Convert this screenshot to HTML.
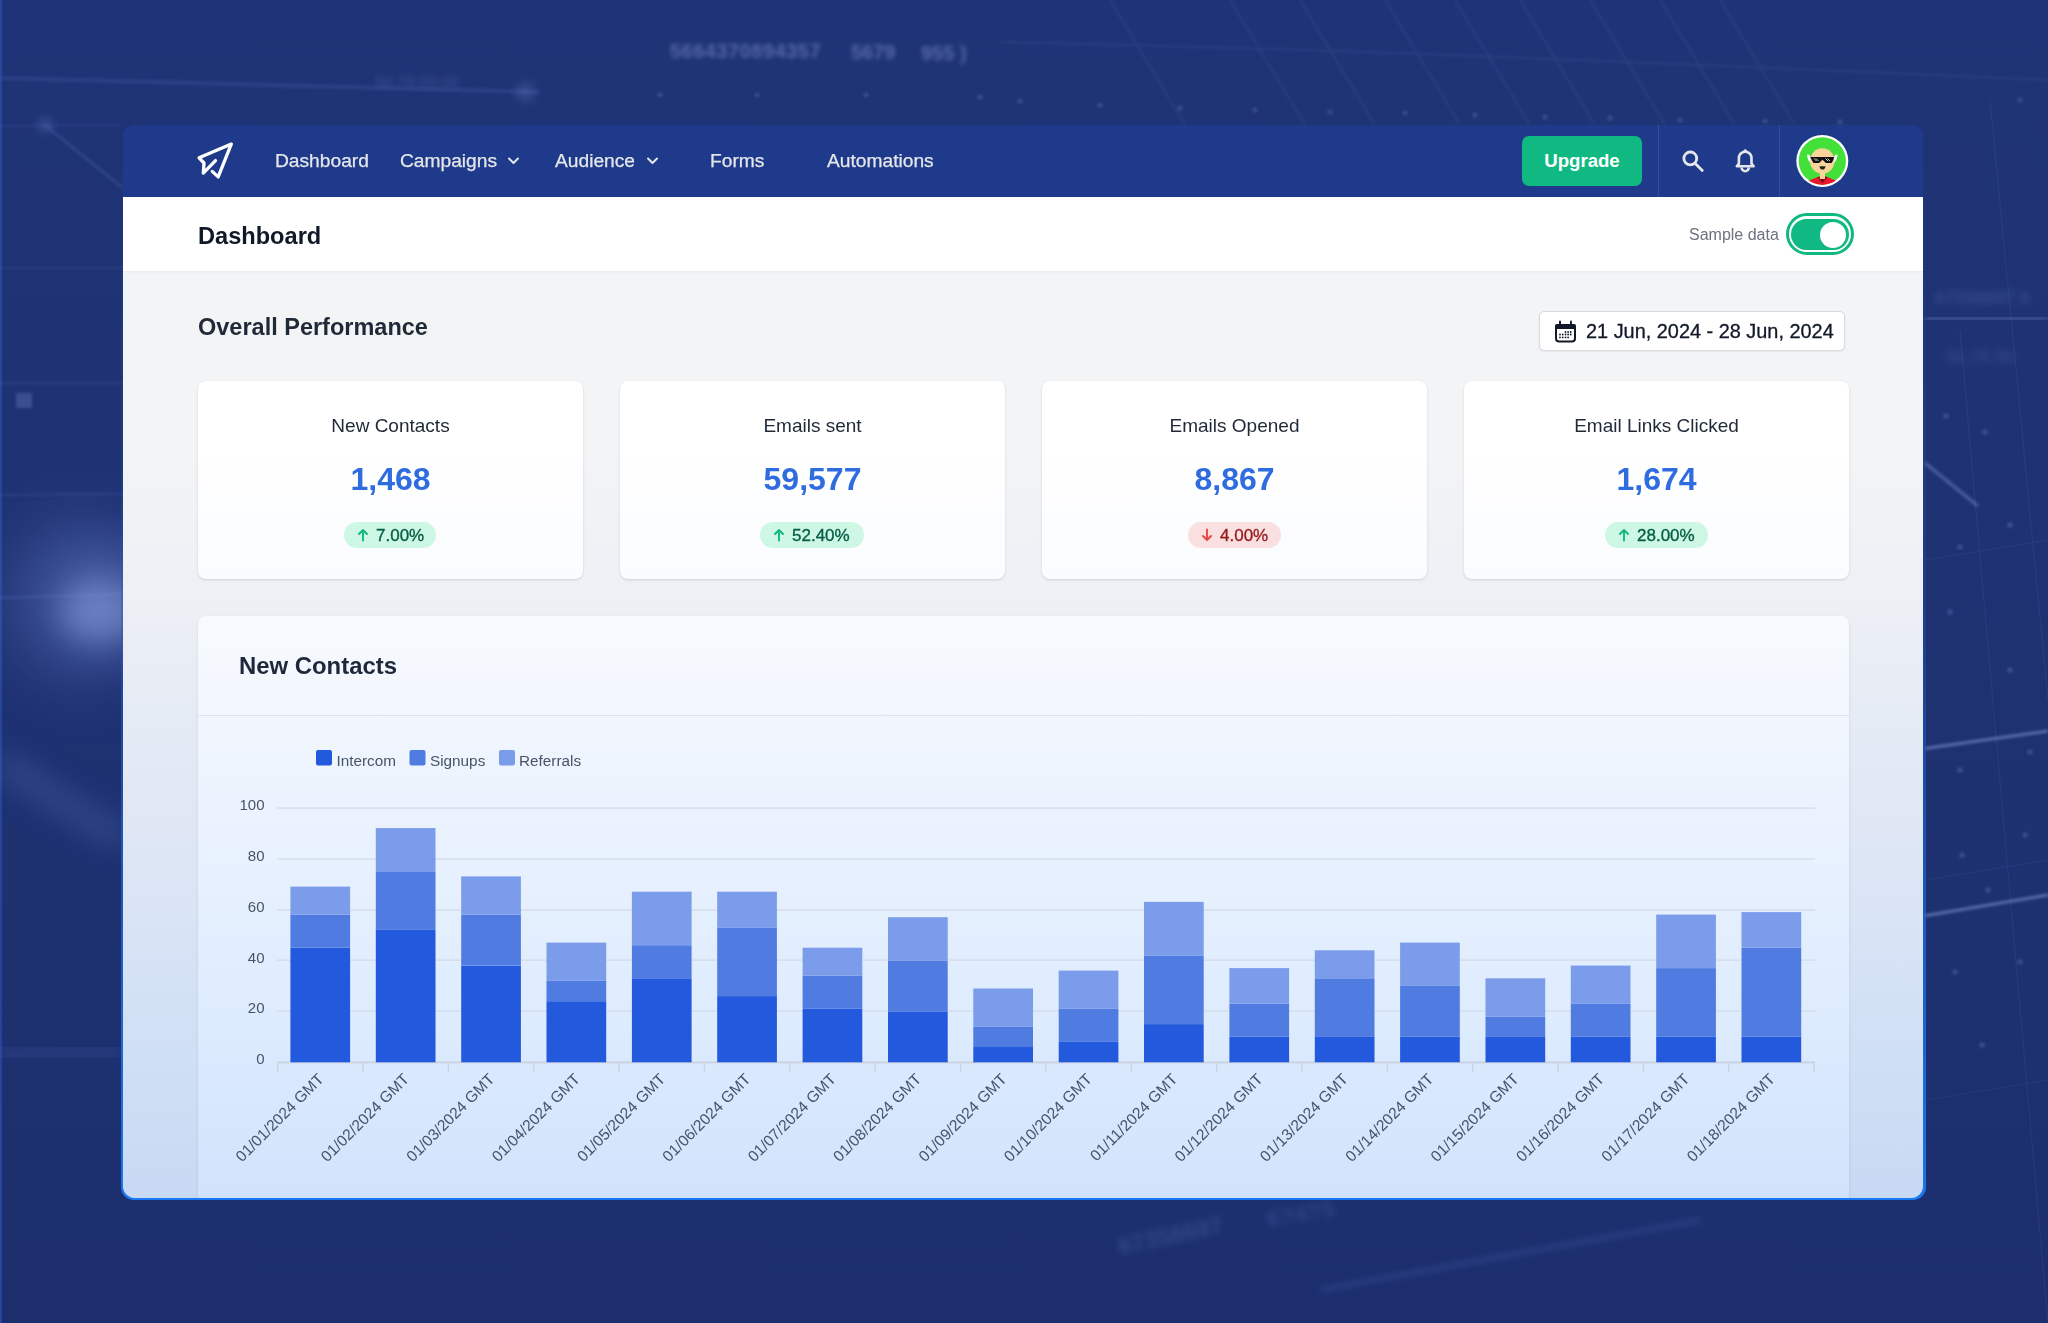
<!DOCTYPE html>
<html><head><meta charset="utf-8">
<style>
*{box-sizing:border-box;margin:0;padding:0}
html,body{width:2048px;height:1323px;overflow:hidden}
body{font-family:"Liberation Sans",sans-serif;background:linear-gradient(to bottom,rgb(31,52,118) 0%,rgb(30,50,114) 50%,rgb(28,46,110) 100%);position:relative}
.abs{position:absolute;white-space:nowrap}
.bg{position:absolute;left:0;top:0;width:2048px;height:1323px;overflow:hidden}
.frame{position:absolute;left:121px;top:125px;width:1805px;height:1075px;border-radius:13px;
 background:linear-gradient(to bottom,rgba(40,70,160,0) 0%,rgba(40,80,180,.35) 45%,#1877f2 100%)}
.win{position:absolute;left:123px;top:125px;width:1800px;height:1073px;border-radius:12px;overflow:hidden;background:linear-gradient(to bottom,#1f3a8a 0,#1f3a8a 72px,#f3f4f6 72px)}
.nav{position:absolute;left:0;top:0;width:1800px;height:72px;background:#1f3a8a}
.lnk{position:absolute;top:0;height:72px;line-height:72px;font-size:19.2px;color:#e5e7eb;white-space:nowrap;-webkit-text-stroke:.25px #e5e7eb}
.hdr{position:absolute;left:0;top:72px;width:1800px;height:74px;background:#fff;box-shadow:0 1px 2px rgba(0,0,0,.05)}
.card{position:absolute;top:256px;width:385px;height:198px;background:#fff;border-radius:8px;box-shadow:0 1px 3px rgba(0,0,0,.1),0 1px 2px rgba(0,0,0,.04)}
.card .t{position:absolute;left:0;right:0;top:33.5px;text-align:center;font-size:19px;color:#1f2937;white-space:nowrap}
.card .v{position:absolute;left:0;right:0;top:80px;text-align:center;font-size:32px;font-weight:700;color:#2f6ce0}
.badge{position:absolute;top:141px;height:26px;border-radius:13px;font-size:17px;line-height:27px;white-space:nowrap}
.badge svg{position:absolute;left:13px;top:6px}
.badge span{position:absolute;left:32px;top:0;-webkit-text-stroke:.35px currentColor}
.up{background:#d1fae5;color:#065f46}
.dn{background:#fee2e2;color:#991b1b}
.panel{position:absolute;left:75px;top:491px;width:1651px;height:640px;background:#fff;border-radius:8px;box-shadow:0 1px 3px rgba(0,0,0,.1)}
.ov{position:absolute;left:0;top:0;width:1800px;height:1073px;mix-blend-mode:multiply;
 background:linear-gradient(to bottom,#fff 0%,#fff 30%,rgb(249,251,254) 44%,rgb(236,243,254) 63%,rgb(222,236,254) 82%,rgb(209,227,252) 100%)}
.tk{font-size:15px;fill:#465467}
.tkx{font-size:15.6px;fill:#465467}
.lg{font-size:15.3px;fill:#465467}
</style></head><body>
<div class="bg">
<svg class="abs" style="left:0;top:0" width="2048" height="1323" viewBox="0 0 2048 1323">
<defs><filter id="b1" x="-50%" y="-50%" width="200%" height="200%"><feGaussianBlur stdDeviation="1.6"/></filter><filter id="b2s" x="-50%" y="-50%" width="200%" height="200%"><feGaussianBlur stdDeviation="2"/></filter><filter id="b2" x="-50%" y="-50%" width="200%" height="200%"><feGaussianBlur stdDeviation="3"/></filter><filter id="b3s" x="-50%" y="-50%" width="200%" height="200%"><feGaussianBlur stdDeviation="5"/></filter><filter id="b3" x="-50%" y="-50%" width="200%" height="200%"><feGaussianBlur stdDeviation="14"/></filter><filter id="b4" x="-50%" y="-50%" width="200%" height="200%"><feGaussianBlur stdDeviation="30"/></filter><radialGradient id="vg" cx="50%" cy="45%" r="75%"><stop offset="0" stop-color="#203578" stop-opacity="0"/><stop offset="1" stop-color="#16245a" stop-opacity=".45"/></radialGradient></defs>

<rect x="0" y="0" width="2" height="1323" fill="#2c4aa8" opacity=".8"/>
<text x="670" y="58" font-size="20" font-weight="700" fill="#9db0ea" opacity=".42" filter="url(#b2s)" letter-spacing=".5">5664370894357</text>
<text x="851" y="59" font-size="20" font-weight="700" fill="#9db0ea" opacity=".42" filter="url(#b2s)">5679</text>
<text x="921" y="60" font-size="20" font-weight="700" fill="#9db0ea" opacity=".42" filter="url(#b2s)">955  )</text>
<g stroke="#7f98e0" fill="none" filter="url(#b1)">
<path d="M0 78 L540 92" stroke-width="4" opacity=".14"/>
<path d="M0 126 L120 125" stroke-width="2" opacity=".12"/>
<path d="M45 125 L123 188" stroke-width="2.5" opacity=".2"/>
<path d="M0 268 L123 268" stroke-width="2" opacity=".12"/>
<path d="M0 383 L123 383" stroke-width="2" opacity=".12"/>
<path d="M0 495 L123 494" stroke-width="2" opacity=".14"/>
<path d="M0 598 L123 594" stroke-width="2" opacity=".22"/>
</g>
<path d="M0 296 L123 296" stroke="#7f98e0" stroke-width="9" opacity=".3" filter="url(#b2)"/>
<circle cx="525" cy="92" r="10" fill="#8fa5e6" opacity=".2" filter="url(#b3s)"/>
<circle cx="45" cy="125" r="8" fill="#8fa5e6" opacity=".2" filter="url(#b3s)"/>
<rect x="16" y="393" width="16" height="15" fill="#8fa5e6" opacity=".25" filter="url(#b1)"/>
<text x="375" y="88" font-size="16" font-weight="700" fill="#8fa5e6" opacity=".18" filter="url(#b2)">56.78.56.85</text>
<g stroke="#8fa5e6" stroke-width="1.5" fill="none" opacity=".12" filter="url(#b1)">
<path d="M1110 0 L1185 125"/>
<path d="M1230 0 L1305 125"/>
<path d="M1300 0 L1375 125"/>
<path d="M1385 0 L1460 125"/>
<path d="M1455 0 L1530 125"/>
<path d="M1520 0 L1595 125"/>
<path d="M1590 0 L1665 125"/>
<path d="M1660 0 L1735 125"/>
<path d="M1720 0 L1795 125"/>
<path d="M1000 42 C1300 48 1600 60 2048 80"/>
</g>
<circle cx="660" cy="95" r="2.5" fill="#8fa5e6" opacity=".25" filter="url(#b1)"/>
<circle cx="757" cy="95" r="2.5" fill="#8fa5e6" opacity=".25" filter="url(#b1)"/>
<circle cx="866" cy="95" r="2.5" fill="#8fa5e6" opacity=".25" filter="url(#b1)"/>
<circle cx="980" cy="97" r="2.5" fill="#8fa5e6" opacity=".25" filter="url(#b1)"/>
<circle cx="1020" cy="101" r="2.5" fill="#8fa5e6" opacity=".25" filter="url(#b1)"/>
<circle cx="1100" cy="105" r="2.5" fill="#8fa5e6" opacity=".25" filter="url(#b1)"/>
<circle cx="1180" cy="108" r="2.5" fill="#8fa5e6" opacity=".25" filter="url(#b1)"/>
<circle cx="1255" cy="110" r="2.5" fill="#8fa5e6" opacity=".25" filter="url(#b1)"/>
<circle cx="1330" cy="112" r="2.5" fill="#8fa5e6" opacity=".25" filter="url(#b1)"/>
<circle cx="1405" cy="113" r="2.5" fill="#8fa5e6" opacity=".25" filter="url(#b1)"/>
<circle cx="1475" cy="115" r="2.5" fill="#8fa5e6" opacity=".25" filter="url(#b1)"/>
<circle cx="1545" cy="117" r="2.5" fill="#8fa5e6" opacity=".25" filter="url(#b1)"/>
<circle cx="1610" cy="118" r="2.5" fill="#8fa5e6" opacity=".25" filter="url(#b1)"/>
<circle cx="1680" cy="120" r="2.5" fill="#8fa5e6" opacity=".25" filter="url(#b1)"/>
<circle cx="1765" cy="121" r="2.5" fill="#8fa5e6" opacity=".25" filter="url(#b1)"/>
<circle cx="1840" cy="122" r="2.5" fill="#8fa5e6" opacity=".25" filter="url(#b1)"/>
<circle cx="2020" cy="100" r="2.5" fill="#8fa5e6" opacity=".25" filter="url(#b1)"/>
<ellipse cx="105" cy="600" rx="55" ry="42" fill="#8ea3e6" opacity=".4" filter="url(#b4)"/><ellipse cx="98" cy="612" rx="38" ry="30" fill="#9aafea" opacity=".45" filter="url(#b3)"/>
<ellipse cx="80" cy="600" rx="80" ry="90" fill="#6f86d4" opacity=".22" filter="url(#b4)"/>
<path d="M0 760 C40 790 90 820 125 840" stroke="#6f86d4" stroke-width="30" fill="none" opacity=".22" filter="url(#b3)"/>
<path d="M0 1055 L123 1050" stroke="#6f86d4" stroke-width="18" fill="none" opacity=".1" filter="url(#b3s)"/>
<path d="M1925 319 L2048 318" stroke="#7f98e0" stroke-width="6" opacity=".35" filter="url(#b2)"/>
<text x="1935" y="304" font-size="18" font-weight="700" fill="#8fa5e6" opacity=".2" filter="url(#b2)">67356697  6</text>
<text x="1945" y="363" font-size="18" font-weight="700" fill="#8fa5e6" opacity=".15" filter="url(#b2)">56.78.56</text>
<path d="M1925 463 L1978 506" stroke="#8fa5e6" stroke-width="3" opacity=".4" filter="url(#b1)"/>
<path d="M1925 748.6 L2048 731" stroke="#9fb4ee" stroke-width="2.5" opacity=".55" filter="url(#b1)"/>
<path d="M1925 915.8 L2048 895" stroke="#9fb4ee" stroke-width="2.5" opacity=".55" filter="url(#b1)"/>
<g stroke="#7f98e0" stroke-width="1" opacity=".1">
<path d="M1960 330 L2048 1323"/><path d="M1990 100 L2048 700"/><path d="M1925 880 L2048 860"/><path d="M1925 1100 L2048 1080"/><path d="M1925 560 L2048 540"/>
</g>
<circle cx="1946" cy="416" r="2.5" fill="#8fa5e6" opacity=".3" filter="url(#b1)"/>
<circle cx="1985" cy="432" r="2.5" fill="#8fa5e6" opacity=".3" filter="url(#b1)"/>
<circle cx="1960" cy="547" r="2.5" fill="#8fa5e6" opacity=".3" filter="url(#b1)"/>
<circle cx="2010" cy="525" r="2.5" fill="#8fa5e6" opacity=".3" filter="url(#b1)"/>
<circle cx="1950" cy="612" r="2.5" fill="#8fa5e6" opacity=".3" filter="url(#b1)"/>
<circle cx="2010" cy="670" r="2.5" fill="#8fa5e6" opacity=".3" filter="url(#b1)"/>
<circle cx="1960" cy="770" r="2.5" fill="#8fa5e6" opacity=".3" filter="url(#b1)"/>
<circle cx="2030" cy="752" r="2.5" fill="#8fa5e6" opacity=".3" filter="url(#b1)"/>
<circle cx="1962" cy="855" r="2.5" fill="#8fa5e6" opacity=".3" filter="url(#b1)"/>
<circle cx="2025" cy="835" r="2.5" fill="#8fa5e6" opacity=".3" filter="url(#b1)"/>
<circle cx="1988" cy="890" r="2.5" fill="#8fa5e6" opacity=".3" filter="url(#b1)"/>
<circle cx="1955" cy="972" r="2.5" fill="#8fa5e6" opacity=".3" filter="url(#b1)"/>
<circle cx="2020" cy="962" r="2.5" fill="#8fa5e6" opacity=".3" filter="url(#b1)"/>
<circle cx="1982" cy="1045" r="2.5" fill="#8fa5e6" opacity=".3" filter="url(#b1)"/>
<text transform="translate(1120 1255) rotate(-12)" font-size="24" font-weight="700" fill="#8fa5e6" opacity=".2" filter="url(#b2)">67356697</text>
<text transform="translate(1268 1228) rotate(-10)" font-size="24" font-weight="700" fill="#8fa5e6" opacity=".17" filter="url(#b2)">6?4?5</text>
<path d="M1320 1290 L1700 1220" stroke="#7f98e0" stroke-width="4" opacity=".2" filter="url(#b2)"/>
</svg>
</div>
<div class="frame"></div>
<div class="win">
  <div class="nav">
    <svg class="abs" style="left:0;top:0" width="200" height="72" viewBox="123 125 200 72">
      <path d="M231.3 144.1 L199.1 157.8 L204 163 L203.3 173.1 L215.5 160.6 M212.2 171.4 L218.2 176.9 L231.3 144.1" fill="none" stroke="#fff" stroke-width="3.3" stroke-linejoin="round" stroke-linecap="round"/>
    </svg>
    <div class="lnk" style="left:152px">Dashboard</div>
    <div class="lnk" style="left:277px">Campaigns</div>
    <div class="lnk" style="left:432px">Audience</div>
    <div class="lnk" style="left:587px">Forms</div>
    <div class="lnk" style="left:704px">Automations</div>
    <svg class="abs" style="left:0;top:0" width="1800" height="72" viewBox="123 125 1800 72">
      <path d="M509 158.5 L513.5 163 L518 158.5" fill="none" stroke="#e5e7eb" stroke-width="2" stroke-linecap="round" stroke-linejoin="round"/>
      <path d="M648 158.5 L652.5 163 L657 158.5" fill="none" stroke="#e5e7eb" stroke-width="2" stroke-linecap="round" stroke-linejoin="round"/>
      <circle cx="1690.3" cy="158.4" r="6.4" fill="none" stroke="#e5e7eb" stroke-width="2.8"/>
      <path d="M1695.2 163.6 L1702.3 170.4" stroke="#e5e7eb" stroke-width="2.8" stroke-linecap="round"/>
      <path d="M1736.8 166.3 L1738.9 163.6 L1738.9 158.3 C1738.9 154.6 1741 152.6 1743.6 151.9 L1745.2 150.6 L1746.8 151.9 C1749.4 152.6 1751.5 154.6 1751.5 158.3 L1751.5 163.6 L1753.6 166.3 Z" fill="none" stroke="#e5e7eb" stroke-width="2.6" stroke-linejoin="round"/>
      <path d="M1741.6 167.6 A3.6 3.6 0 0 0 1748.8 167.6" fill="none" stroke="#e5e7eb" stroke-width="2.6"/>
    </svg>
    <div class="abs" style="left:1399px;top:11px;width:120px;height:50px;background:#10b981;border-radius:7px;color:#fff;font-weight:700;font-size:18.6px;line-height:50px;text-align:center">Upgrade</div>
    <div class="abs" style="left:1535px;top:0;width:1px;height:72px;background:rgba(255,255,255,.1)"></div>
    <div class="abs" style="left:1656px;top:0;width:1px;height:72px;background:rgba(255,255,255,.1)"></div>
    <svg class="abs" style="left:0;top:0" width="1800" height="72" viewBox="123 125 1800 72">
      <defs><clipPath id="av"><circle cx="1822.3" cy="160.9" r="24"/></clipPath></defs>
      <circle cx="1822.3" cy="160.9" r="26" fill="#fff"/>
      <circle cx="1822.3" cy="160.9" r="23.6" fill="#43e03a"/>
      <g clip-path="url(#av)">
        <path d="M1808 181 L1822.5 175 L1837 181 L1842 190 L1803 190 Z" fill="#e8192c"/>
        <path d="M1817.5 177 L1822.5 183 L1827.5 177 Z" fill="#7a0a10"/>
        <rect x="1819.8" y="170" width="5.2" height="9" fill="#f9d39a"/>
      </g>
      <path d="M1807 155 C1809 153.5 1810 156 1811 158 L1811 163 C1809 162 1807.5 159 1807 155 Z" fill="#fff"/>
      <path d="M1837.6 155 C1835.6 153.5 1834.6 156 1833.6 158 L1833.6 163 C1835.6 162 1837.1 159 1837.6 155 Z" fill="#fff"/>
      <ellipse cx="1822.3" cy="161" rx="12.2" ry="12.8" fill="#f9d39a"/>
      <path d="M1810.2 157 L1834.3 157 L1833 160.5 L1831.5 163 L1826 163 L1822.5 159.8 L1819 163 L1813.5 163 L1812 160.5 Z" fill="#111"/>
      <path d="M1814 158.5 L1816.5 161 M1816 158.5 L1818.5 161 M1825.5 158.5 L1828 161 M1827.5 158.5 L1830 161" stroke="#fff" stroke-width=".8"/>
      <path d="M1819.5 166.3 L1825.5 166.3 C1825.3 168.8 1824 169.6 1822.5 169.6 C1821 169.6 1819.7 168.8 1819.5 166.3 Z" fill="#222"/>
    </svg>
  </div>
  <div class="hdr">
    <div class="abs" style="left:75px;top:26px;font-size:23.6px;font-weight:700;color:#111827">Dashboard</div>
    <div class="abs" style="left:1566px;top:29px;font-size:16px;color:#6b7280">Sample data</div>
    <div class="abs" style="left:1663px;top:16px;width:68px;height:42px;border-radius:21px;border:3px solid #10b981;background:#fff">
      <div class="abs" style="left:2px;top:2.5px;width:58px;height:31px;border-radius:16px;background:#10b981"></div>
      <div class="abs" style="left:30.5px;top:5.5px;width:26px;height:26px;border-radius:50%;background:#fff"></div>
    </div>
  </div>
  <div class="abs" style="left:75px;top:189px;font-size:23.5px;font-weight:700;color:#1f2937">Overall Performance</div>
  <div class="abs" style="left:1416px;top:186px;width:306px;height:40px;background:#fff;border:1px solid #d5d9e0;border-radius:5px;box-shadow:0 1px 2px rgba(0,0,0,.06)">
    <svg class="abs" style="left:0;top:0" width="306" height="40" viewBox="1539 311 306 40">
      <rect x="1555" y="324" width="19" height="16.4" rx="3" fill="none" stroke="#111827" stroke-width="2"/>
      <rect x="1554" y="323" width="21" height="5" rx="2" fill="#111827"/>
      <path d="M1559 320.5 L1559 323.5 M1570 320.5 L1570 323.5" stroke="#111827" stroke-width="1.9" stroke-linecap="round"/>
      <g fill="#111827"><circle cx="1564.5" cy="331" r=".9"/><circle cx="1567.1" cy="331" r=".9"/><circle cx="1569.7" cy="331" r=".9"/>
      <circle cx="1559" cy="333.5" r=".9"/><circle cx="1561.7" cy="333.5" r=".9"/><circle cx="1564.5" cy="333.5" r=".9"/><circle cx="1567.1" cy="333.5" r=".9"/><circle cx="1569.7" cy="333.5" r=".9"/>
      <circle cx="1559" cy="336.4" r=".9"/><circle cx="1561.7" cy="336.4" r=".9"/><circle cx="1564.5" cy="336.4" r=".9"/><circle cx="1567.1" cy="336.4" r=".9"/></g>
    </svg>
    <div class="abs" style="left:46px;top:8px;font-size:19.9px;color:#111827;-webkit-text-stroke:.3px #111827">21 Jun, 2024 - 28 Jun, 2024</div>
  </div>

  <div class="card" style="left:75px"><div class="t">New Contacts</div><div class="v">1,468</div>
    <div class="badge up" style="left:146px;width:92px"><svg width="12" height="14" viewBox="0 0 12 14"><path d="M6 12.5 L6 2 M2 6 L6 2 L10 6" fill="none" stroke="#10b981" stroke-width="1.9" stroke-linecap="round" stroke-linejoin="round"/></svg><span>7.00%</span></div></div>
  <div class="card" style="left:497px"><div class="t">Emails sent</div><div class="v">59,577</div>
    <div class="badge up" style="left:140px;width:104px"><svg width="12" height="14" viewBox="0 0 12 14"><path d="M6 12.5 L6 2 M2 6 L6 2 L10 6" fill="none" stroke="#10b981" stroke-width="1.9" stroke-linecap="round" stroke-linejoin="round"/></svg><span>52.40%</span></div></div>
  <div class="card" style="left:919px"><div class="t">Emails Opened</div><div class="v">8,867</div>
    <div class="badge dn" style="left:146px;width:93px"><svg width="12" height="14" viewBox="0 0 12 14"><path d="M6 1.5 L6 12 M2 8 L6 12 L10 8" fill="none" stroke="#ef4444" stroke-width="1.9" stroke-linecap="round" stroke-linejoin="round"/></svg><span>4.00%</span></div></div>
  <div class="card" style="left:1341px"><div class="t">Email Links Clicked</div><div class="v">1,674</div>
    <div class="badge up" style="left:141px;width:103px"><svg width="12" height="14" viewBox="0 0 12 14"><path d="M6 12.5 L6 2 M2 6 L6 2 L10 6" fill="none" stroke="#10b981" stroke-width="1.9" stroke-linecap="round" stroke-linejoin="round"/></svg><span>28.00%</span></div></div>

  <div class="panel">
    <div class="abs" style="left:41px;top:36.3px;font-size:23.9px;font-weight:700;color:#1e293b">New Contacts</div>
    <div class="abs" style="left:0;top:99px;width:1651px;height:1px;background:#e9ecf1"></div>
  </div>
  <div class="ov"></div>
<svg class="abs" style="left:0;top:0" width="1800" height="1074" viewBox="123 125 1800 1074">
<rect x="277" y="1061.5" width="1538" height="1.8" fill="#c9d2de"/>
<rect x="277" y="1010.5" width="1538" height="1.2" fill="#d3dae4"/>
<rect x="277" y="959.5" width="1538" height="1.2" fill="#d3dae4"/>
<rect x="277" y="909.5" width="1538" height="1.2" fill="#d3dae4"/>
<rect x="277" y="858.5" width="1538" height="1.2" fill="#d3dae4"/>
<rect x="277" y="807.5" width="1538" height="1.2" fill="#d3dae4"/>
<rect x="277.0" y="1062" width="1.3" height="10" fill="#cbd3de"/>
<rect x="362.4" y="1062" width="1.3" height="10" fill="#cbd3de"/>
<rect x="447.7" y="1062" width="1.3" height="10" fill="#cbd3de"/>
<rect x="533.1" y="1062" width="1.3" height="10" fill="#cbd3de"/>
<rect x="618.4" y="1062" width="1.3" height="10" fill="#cbd3de"/>
<rect x="703.8" y="1062" width="1.3" height="10" fill="#cbd3de"/>
<rect x="789.2" y="1062" width="1.3" height="10" fill="#cbd3de"/>
<rect x="874.5" y="1062" width="1.3" height="10" fill="#cbd3de"/>
<rect x="959.9" y="1062" width="1.3" height="10" fill="#cbd3de"/>
<rect x="1045.2" y="1062" width="1.3" height="10" fill="#cbd3de"/>
<rect x="1130.6" y="1062" width="1.3" height="10" fill="#cbd3de"/>
<rect x="1216.0" y="1062" width="1.3" height="10" fill="#cbd3de"/>
<rect x="1301.3" y="1062" width="1.3" height="10" fill="#cbd3de"/>
<rect x="1386.7" y="1062" width="1.3" height="10" fill="#cbd3de"/>
<rect x="1472.0" y="1062" width="1.3" height="10" fill="#cbd3de"/>
<rect x="1557.4" y="1062" width="1.3" height="10" fill="#cbd3de"/>
<rect x="1642.8" y="1062" width="1.3" height="10" fill="#cbd3de"/>
<rect x="1728.1" y="1062" width="1.3" height="10" fill="#cbd3de"/>
<rect x="1813.5" y="1062" width="1.3" height="10" fill="#cbd3de"/>
<rect x="290.4" y="947.7" width="59.7" height="114.6" fill="#2359dc"/>
<rect x="290.4" y="914.6" width="59.7" height="33.1" fill="#507ce2"/>
<rect x="290.4" y="886.6" width="59.7" height="28.0" fill="#7b9cea"/>
<rect x="375.8" y="929.9" width="59.7" height="132.4" fill="#2359dc"/>
<rect x="375.8" y="871.3" width="59.7" height="58.6" fill="#507ce2"/>
<rect x="375.8" y="828.1" width="59.7" height="43.3" fill="#7b9cea"/>
<rect x="461.2" y="965.6" width="59.7" height="96.7" fill="#2359dc"/>
<rect x="461.2" y="914.6" width="59.7" height="50.9" fill="#507ce2"/>
<rect x="461.2" y="876.4" width="59.7" height="38.2" fill="#7b9cea"/>
<rect x="546.5" y="1001.2" width="59.7" height="61.1" fill="#2359dc"/>
<rect x="546.5" y="980.8" width="59.7" height="20.4" fill="#507ce2"/>
<rect x="546.5" y="942.6" width="59.7" height="38.2" fill="#7b9cea"/>
<rect x="631.9" y="978.3" width="59.7" height="84.0" fill="#2359dc"/>
<rect x="631.9" y="945.2" width="59.7" height="33.1" fill="#507ce2"/>
<rect x="631.9" y="891.7" width="59.7" height="53.5" fill="#7b9cea"/>
<rect x="717.2" y="996.1" width="59.7" height="66.2" fill="#2359dc"/>
<rect x="717.2" y="927.4" width="59.7" height="68.7" fill="#507ce2"/>
<rect x="717.2" y="891.7" width="59.7" height="35.6" fill="#7b9cea"/>
<rect x="802.6" y="1008.8" width="59.7" height="53.5" fill="#2359dc"/>
<rect x="802.6" y="975.7" width="59.7" height="33.1" fill="#507ce2"/>
<rect x="802.6" y="947.7" width="59.7" height="28.0" fill="#7b9cea"/>
<rect x="888.0" y="1011.4" width="59.7" height="50.9" fill="#2359dc"/>
<rect x="888.0" y="960.5" width="59.7" height="50.9" fill="#507ce2"/>
<rect x="888.0" y="917.2" width="59.7" height="43.3" fill="#7b9cea"/>
<rect x="973.3" y="1047.0" width="59.7" height="15.3" fill="#2359dc"/>
<rect x="973.3" y="1026.7" width="59.7" height="20.4" fill="#507ce2"/>
<rect x="973.3" y="988.5" width="59.7" height="38.2" fill="#7b9cea"/>
<rect x="1058.7" y="1041.9" width="59.7" height="20.4" fill="#2359dc"/>
<rect x="1058.7" y="1008.8" width="59.7" height="33.1" fill="#507ce2"/>
<rect x="1058.7" y="970.6" width="59.7" height="38.2" fill="#7b9cea"/>
<rect x="1144.0" y="1024.1" width="59.7" height="38.2" fill="#2359dc"/>
<rect x="1144.0" y="955.4" width="59.7" height="68.7" fill="#507ce2"/>
<rect x="1144.0" y="901.9" width="59.7" height="53.5" fill="#7b9cea"/>
<rect x="1229.4" y="1036.8" width="59.7" height="25.5" fill="#2359dc"/>
<rect x="1229.4" y="1003.7" width="59.7" height="33.1" fill="#507ce2"/>
<rect x="1229.4" y="968.1" width="59.7" height="35.6" fill="#7b9cea"/>
<rect x="1314.8" y="1036.8" width="59.7" height="25.5" fill="#2359dc"/>
<rect x="1314.8" y="978.3" width="59.7" height="58.6" fill="#507ce2"/>
<rect x="1314.8" y="950.3" width="59.7" height="28.0" fill="#7b9cea"/>
<rect x="1400.1" y="1036.8" width="59.7" height="25.5" fill="#2359dc"/>
<rect x="1400.1" y="985.9" width="59.7" height="50.9" fill="#507ce2"/>
<rect x="1400.1" y="942.6" width="59.7" height="43.3" fill="#7b9cea"/>
<rect x="1485.5" y="1036.8" width="59.7" height="25.5" fill="#2359dc"/>
<rect x="1485.5" y="1016.5" width="59.7" height="20.4" fill="#507ce2"/>
<rect x="1485.5" y="978.3" width="59.7" height="38.2" fill="#7b9cea"/>
<rect x="1570.8" y="1036.8" width="59.7" height="25.5" fill="#2359dc"/>
<rect x="1570.8" y="1003.7" width="59.7" height="33.1" fill="#507ce2"/>
<rect x="1570.8" y="965.6" width="59.7" height="38.2" fill="#7b9cea"/>
<rect x="1656.2" y="1036.8" width="59.7" height="25.5" fill="#2359dc"/>
<rect x="1656.2" y="968.1" width="59.7" height="68.7" fill="#507ce2"/>
<rect x="1656.2" y="914.6" width="59.7" height="53.5" fill="#7b9cea"/>
<rect x="1741.5" y="1036.8" width="59.7" height="25.5" fill="#2359dc"/>
<rect x="1741.5" y="947.7" width="59.7" height="89.1" fill="#507ce2"/>
<rect x="1741.5" y="912.1" width="59.7" height="35.6" fill="#7b9cea"/>
<text x="264.5" y="1064.3" text-anchor="end" class="tk">0</text>
<text x="264.5" y="1013.4" text-anchor="end" class="tk">20</text>
<text x="264.5" y="962.5" text-anchor="end" class="tk">40</text>
<text x="264.5" y="911.5" text-anchor="end" class="tk">60</text>
<text x="264.5" y="860.6" text-anchor="end" class="tk">80</text>
<text x="264.5" y="809.7" text-anchor="end" class="tk">100</text>
<text transform="translate(324.8,1080) rotate(-45)" text-anchor="end" class="tkx">01/01/2024 GMT</text>
<text transform="translate(410.1,1080) rotate(-45)" text-anchor="end" class="tkx">01/02/2024 GMT</text>
<text transform="translate(495.5,1080) rotate(-45)" text-anchor="end" class="tkx">01/03/2024 GMT</text>
<text transform="translate(580.9,1080) rotate(-45)" text-anchor="end" class="tkx">01/04/2024 GMT</text>
<text transform="translate(666.2,1080) rotate(-45)" text-anchor="end" class="tkx">01/05/2024 GMT</text>
<text transform="translate(751.6,1080) rotate(-45)" text-anchor="end" class="tkx">01/06/2024 GMT</text>
<text transform="translate(836.9,1080) rotate(-45)" text-anchor="end" class="tkx">01/07/2024 GMT</text>
<text transform="translate(922.3,1080) rotate(-45)" text-anchor="end" class="tkx">01/08/2024 GMT</text>
<text transform="translate(1007.7,1080) rotate(-45)" text-anchor="end" class="tkx">01/09/2024 GMT</text>
<text transform="translate(1093.0,1080) rotate(-45)" text-anchor="end" class="tkx">01/10/2024 GMT</text>
<text transform="translate(1178.4,1080) rotate(-45)" text-anchor="end" class="tkx">01/11/2024 GMT</text>
<text transform="translate(1263.7,1080) rotate(-45)" text-anchor="end" class="tkx">01/12/2024 GMT</text>
<text transform="translate(1349.1,1080) rotate(-45)" text-anchor="end" class="tkx">01/13/2024 GMT</text>
<text transform="translate(1434.5,1080) rotate(-45)" text-anchor="end" class="tkx">01/14/2024 GMT</text>
<text transform="translate(1519.8,1080) rotate(-45)" text-anchor="end" class="tkx">01/15/2024 GMT</text>
<text transform="translate(1605.2,1080) rotate(-45)" text-anchor="end" class="tkx">01/16/2024 GMT</text>
<text transform="translate(1690.5,1080) rotate(-45)" text-anchor="end" class="tkx">01/17/2024 GMT</text>
<text transform="translate(1775.9,1080) rotate(-45)" text-anchor="end" class="tkx">01/18/2024 GMT</text>
<rect x="316" y="750" width="16" height="15.5" rx="2" fill="#2359dc"/>
<text x="336.5" y="766" class="lg">Intercom</text>
<rect x="409.5" y="750" width="16" height="15.5" rx="2" fill="#507ce2"/>
<text x="430" y="766" class="lg">Signups</text>
<rect x="499" y="750" width="16" height="15.5" rx="2" fill="#7b9cea"/>
<text x="519" y="766" class="lg">Referrals</text>
</svg>
</div>
</body></html>
